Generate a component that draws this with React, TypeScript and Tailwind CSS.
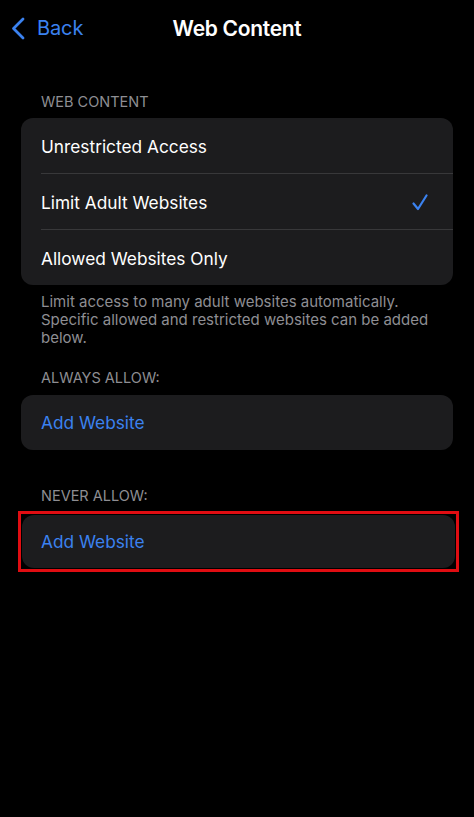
import React from "react";

const font = { fontFamily: "Inter, 'Noto Sans', sans-serif" };

function Check() {
  return (
    <svg width="16" height="17" viewBox="0 0 16 17" fill="none">
      <path d="M1.5 9.5 L6 15 L14.5 1.5" stroke="#3b82f0" strokeWidth="2.2" strokeLinecap="round" strokeLinejoin="round" />
    </svg>
  );
}

export default function App() {
  return (
    <div className="w-[474px] h-[817px] bg-black text-white overflow-hidden" style={font}>
      <div className="h-[56px] flex items-center relative">
        <div className="flex items-center pl-[11px] gap-[12px] text-[#3b82f0]">
          <svg width="14" height="23" viewBox="0 0 14 23" fill="none">
            <path d="M12 2 L2.5 11.5 L12 21" stroke="#3b82f0" strokeWidth="2.8" strokeLinecap="round" strokeLinejoin="round" />
          </svg>
          <span className="text-[20px] leading-none tracking-[-0.1px]">Back</span>
        </div>
        <div className="absolute left-0 right-0 text-center text-[21px] font-semibold leading-none tracking-[-0.3px] pointer-events-none">Web Content</div>
      </div>

      <div className="px-[21px]">
        <div className="pt-[37px] pb-[7px] px-[20px] text-[14.5px] text-[#8e8e93] leading-[18px]">WEB CONTENT</div>
        <div className="bg-[#1c1c1e] rounded-[12px] w-[432px]">
          <div className="h-[55px] flex items-center pl-[20px] pt-[2px] text-[17.3px]">Unrestricted Access</div>
          <div className="ml-[20px] h-px bg-[#38383a]" />
          <div className="h-[55px] flex items-center justify-between pl-[20px] pr-[25px] pt-[2px] text-[17.3px]">
            <span>Limit Adult Websites</span>
            <Check />
          </div>
          <div className="ml-[20px] h-px bg-[#38383a]" />
          <div className="h-[55px] flex items-center pl-[20px] pt-[2px] text-[17.3px]">Allowed Websites Only</div>
        </div>
        <div className="pt-[8px] px-[20px] text-[15px] leading-[18px] text-[#8e8e93]">
          Limit access to many adult websites automatically. Specific allowed and restricted websites can be added below.
        </div>

        <div className="pt-[22px] pb-[8px] px-[20px] text-[14.5px] text-[#8e8e93] leading-[18px]">ALWAYS ALLOW:</div>
        <div className="bg-[#1c1c1e] rounded-[12px] w-[432px] h-[55px] flex items-center pl-[20px] text-[17.3px] text-[#3b82f0]">Add Website</div>

        <div className="pt-[37px] pb-[9px] px-[20px] text-[14.5px] text-[#8e8e93] leading-[18px]">NEVER ALLOW:</div>
        <div className="-ml-[3px] w-[441px] border-[3px] border-[#e00d12] p-px -mt-[3px]">
          <div className="bg-[#1c1c1e] rounded-[12px] h-[53px] flex items-center pl-[19px] text-[17.3px] text-[#3b82f0]">Add Website</div>
        </div>
      </div>
    </div>
  );
}
